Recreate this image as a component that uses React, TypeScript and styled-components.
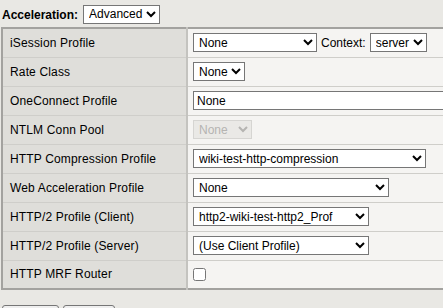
import { createGlobalStyle, styled } from 'styled-components'

const GlobalStyle = createGlobalStyle`
    html, body {
        margin: 0;
        padding: 0;
        background: #e9e8e4;
        overflow: hidden;
    }
    body {
        font-family: "Liberation Sans", Arial, sans-serif;
        font-size: 12px;
        color: #000;
    }
`;

const Page = styled.div`
    width: 443px;
    height: 308px;
    overflow: hidden;
`;

const Header = styled.div`
    display: flex;
    align-items: center;
    gap: 5px;
    height: 27px;
    padding-left: 2px;
    box-sizing: border-box;
    padding-bottom: 3px;
`;

const HeaderLabel = styled.label`
    font-weight: bold;
    font-size: 12px;
    margin-top: 6px;
`;

const Table = styled.table`
    border-collapse: collapse;
    width: 480px;
    margin-left: 1px;
    border: 2px solid #a3a29f;
`;

const Row = styled.tr`
    height: 29px;
    & + & td {
        border-top: 1px solid #cfceca;
    }
`;

const LabelCell = styled.td`
    width: 176px;
    padding: 0 0 0 7px;
    background: #dfdeda;
    border-right: 2px solid #c4c3bf;
    white-space: nowrap;
    letter-spacing: 0.15px;
`;

const ValueCell = styled.td`
    background: #f5f4f2;
    padding: 0 0 0 5px;
    white-space: nowrap;
`;

const Inline = styled.div`
    display: flex;
    align-items: center;
    gap: 4px;
`;

const Select = styled.select<{ $w: number }>`
    width: ${p => p.$w}px;
    height: 19px;
    font-family: "Liberation Sans", Arial, sans-serif;
    font-size: 12px;
    padding: 0 0 0 1px;
    border: 1px solid #767676;
    border-radius: 0;
    background: #fff;
    color: #000;
    box-sizing: border-box;

    &:disabled {
        background: #e6e5e2;
        border-color: #c9c8c5;
        color: #9a9996;
    }
`;

const TextInput = styled.input`
    width: 270px;
    height: 19px;
    box-sizing: border-box;
    border: 1px solid #767676;
    padding: 0 3px;
    font-family: "Liberation Sans", Arial, sans-serif;
    font-size: 12px;
    background: #fff;
`;

const Check = styled.input`
    width: 13px;
    height: 13px;
    margin: 1px 0 0 0;
    display: block;
`;

const Buttons = styled.div`
    display: flex;
    gap: 4px;
    padding: 15px 0 0 2px;
`;

const Button = styled.button`
    font-family: "Liberation Sans", Arial, sans-serif;
    font-size: 12px;
    height: 21px;
    padding: 0 8px;
    border: 1px solid #767676;
    border-radius: 3px;
    background: #efefef;
`;

type Opt = { value: string; width: number; disabled?: boolean }

const rows: { label: string; select?: Opt; input?: string; check?: boolean; context?: boolean }[] = [
    { label: 'iSession Profile', select: { value: 'None', width: 124 }, context: true },
    { label: 'Rate Class', select: { value: 'None', width: 52 } },
    { label: 'OneConnect Profile', input: 'None' },
    { label: 'NTLM Conn Pool', select: { value: 'None', width: 59, disabled: true } },
    { label: 'HTTP Compression Profile', select: { value: 'wiki-test-http-compression', width: 233 } },
    { label: 'Web Acceleration Profile', select: { value: 'None', width: 196 } },
    { label: 'HTTP/2 Profile (Client)', select: { value: 'http2-wiki-test-http2_Prof', width: 176 } },
    { label: 'HTTP/2 Profile (Server)', select: { value: '(Use Client Profile)', width: 176 } },
    { label: 'HTTP MRF Router', check: true },
];

export default function App() {
    return (
        <Page>
            <GlobalStyle />
            <Header>
                <HeaderLabel>Acceleration:</HeaderLabel>
                <Select $w={77} defaultValue="Advanced" style={{ marginTop: 4 }}>
                    <option>Basic</option>
                    <option>Advanced</option>
                </Select>
            </Header>
            <Table>
                <tbody>
                    {rows.map(r => (
                        <Row key={r.label}>
                            <LabelCell>{r.label}</LabelCell>
                            <ValueCell>
                                {r.select && (
                                    <Inline>
                                        <Select $w={r.select.width} disabled={r.select.disabled} defaultValue={r.select.value}>
                                            <option>{r.select.value}</option>
                                        </Select>
                                        {r.context && (
                                            <>
                                                <span>Context:</span>
                                                <Select $w={57} defaultValue="server">
                                                    <option>all</option>
                                                    <option>server</option>
                                                </Select>
                                            </>
                                        )}
                                    </Inline>
                                )}
                                {r.input && <TextInput defaultValue={r.input} />}
                                {r.check && <Check type="checkbox" />}
                            </ValueCell>
                        </Row>
                    ))}
                </tbody>
            </Table>
            <Buttons>
                <Button>Update</Button>
                <Button>Delete</Button>
            </Buttons>
        </Page>
    )
}
